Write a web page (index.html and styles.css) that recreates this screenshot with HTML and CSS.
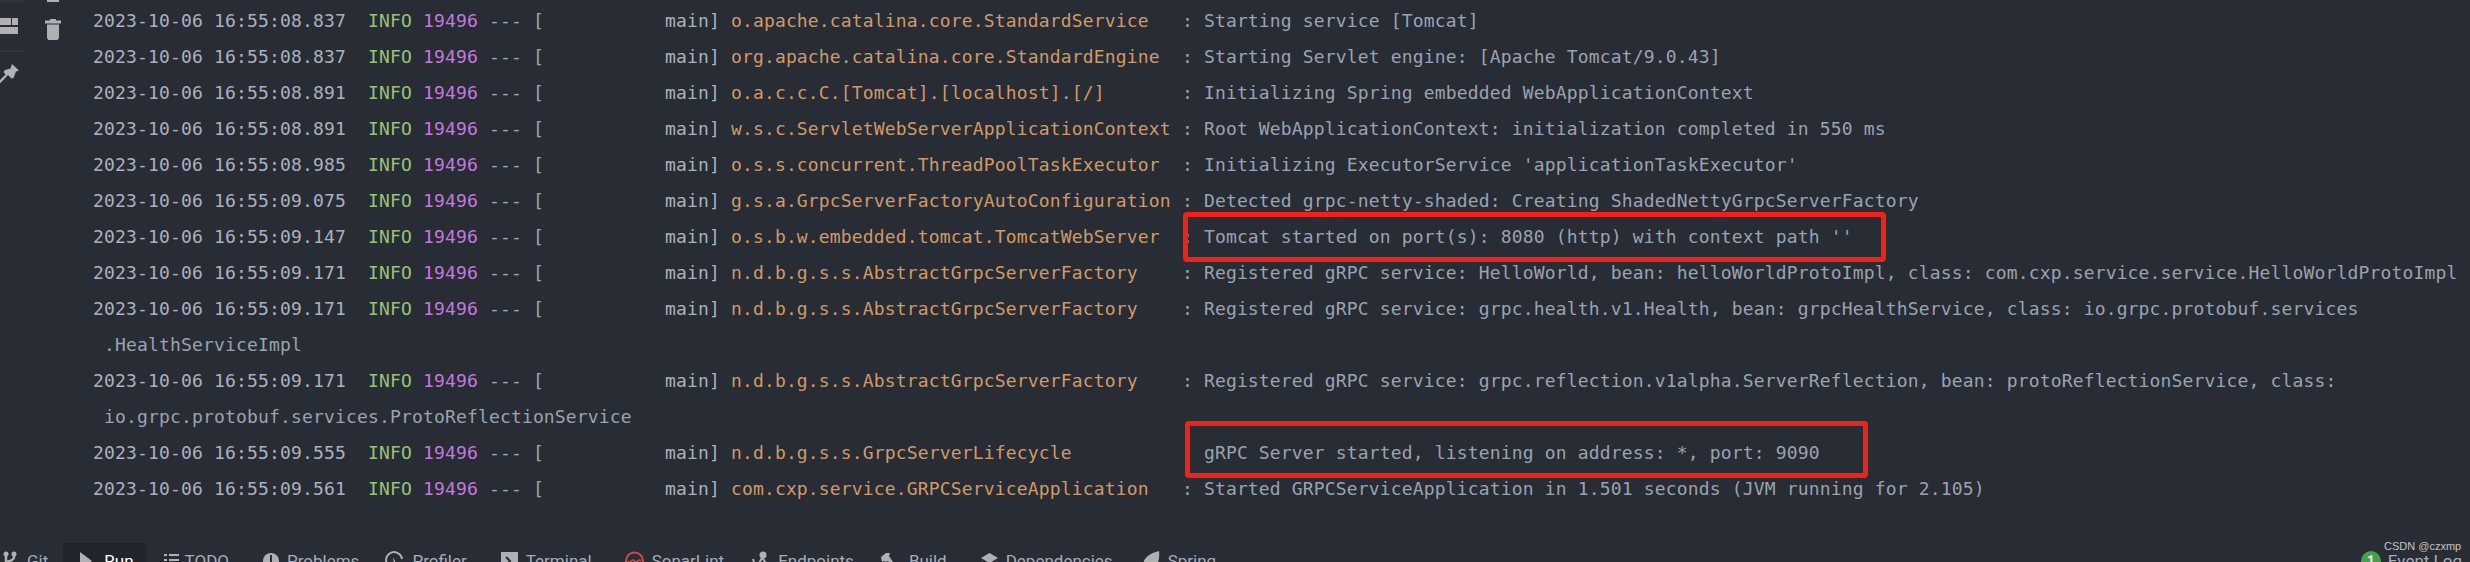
FILE: index.html
```html
<!DOCTYPE html>
<html lang="en">
<head>
<meta charset="utf-8">
<title>Run console</title>
<link rel="stylesheet" href="styles.css">
</head>
<body>
<div class="screen">
  <div class="main">
    <aside class="gutter">
      <div class="tools-a">
        <div class="divider"></div>
        <svg class="icon-layout" width="18" height="16" viewBox="0 0 18 16"><path fill="#afb1b3" d="M0 0h11v7H0zM12 0h6v7h-6zM0 9h18v7H0z"/></svg>
        <div class="divider second"></div>
        <svg class="icon-pin" width="20" height="20" viewBox="0 0 20 20"><path fill="#afb1b3" d="M12 0l7 6.500-3 1-2.500 6.500-2 .5-3.500-3.500L1 18.500 0 19v-3l5.500-5.500L3.500 8l1.500-2 5.500-1.500z"/></svg>
      </div>
      <div class="tools-b">
        <div class="icon-stub"></div>
        <svg class="icon-trash" width="16" height="21" viewBox="0 0 16 21"><path fill="#afb1b3" d="M5 0h6v1.500h5v3H0v-3h5zM2 5.500h12V19l-1.500 2h-9L2 19z"/></svg>
      </div>
    </aside>
    <main class="log">
      <div class="row"><span class="time">2023-10-06 16:55:08.837</span>  <span class="info">INFO</span> <span class="pid">19496</span> <span class="sep">---</span> <span class="sep">[</span><span class="time">           main]</span> <span class="logger">o.apache.catalina.core.StandardService</span><span class="msg">: Starting service [Tomcat]</span></div>
      <div class="row"><span class="time">2023-10-06 16:55:08.837</span>  <span class="info">INFO</span> <span class="pid">19496</span> <span class="sep">---</span> <span class="sep">[</span><span class="time">           main]</span> <span class="logger">org.apache.catalina.core.StandardEngine</span><span class="msg">: Starting Servlet engine: [Apache Tomcat/9.0.43]</span></div>
      <div class="row"><span class="time">2023-10-06 16:55:08.891</span>  <span class="info">INFO</span> <span class="pid">19496</span> <span class="sep">---</span> <span class="sep">[</span><span class="time">           main]</span> <span class="logger">o.a.c.c.C.[Tomcat].[localhost].[/]</span><span class="msg">: Initializing Spring embedded WebApplicationContext</span></div>
      <div class="row"><span class="time">2023-10-06 16:55:08.891</span>  <span class="info">INFO</span> <span class="pid">19496</span> <span class="sep">---</span> <span class="sep">[</span><span class="time">           main]</span> <span class="logger">w.s.c.ServletWebServerApplicationContext</span><span class="msg">: Root WebApplicationContext: initialization completed in 550 ms</span></div>
      <div class="row"><span class="time">2023-10-06 16:55:08.985</span>  <span class="info">INFO</span> <span class="pid">19496</span> <span class="sep">---</span> <span class="sep">[</span><span class="time">           main]</span> <span class="logger">o.s.s.concurrent.ThreadPoolTaskExecutor</span><span class="msg">: Initializing ExecutorService 'applicationTaskExecutor'</span></div>
      <div class="row"><span class="time">2023-10-06 16:55:09.075</span>  <span class="info">INFO</span> <span class="pid">19496</span> <span class="sep">---</span> <span class="sep">[</span><span class="time">           main]</span> <span class="logger">g.s.a.GrpcServerFactoryAutoConfiguration</span><span class="msg">: Detected grpc-netty-shaded: Creating ShadedNettyGrpcServerFactory</span></div>
      <div class="row"><span class="time">2023-10-06 16:55:09.147</span>  <span class="info">INFO</span> <span class="pid">19496</span> <span class="sep">---</span> <span class="sep">[</span><span class="time">           main]</span> <span class="logger">o.s.b.w.embedded.tomcat.TomcatWebServer</span><span class="msg">: Tomcat started on port(s): 8080 (http) with context path ''</span></div>
      <div class="row"><span class="time">2023-10-06 16:55:09.171</span>  <span class="info">INFO</span> <span class="pid">19496</span> <span class="sep">---</span> <span class="sep">[</span><span class="time">           main]</span> <span class="logger">n.d.b.g.s.s.AbstractGrpcServerFactory</span><span class="msg">: Registered gRPC service: HelloWorld, bean: helloWorldProtoImpl, class: com.cxp.service.service.HelloWorldProtoImpl</span></div>
      <div class="row"><span class="time">2023-10-06 16:55:09.171</span>  <span class="info">INFO</span> <span class="pid">19496</span> <span class="sep">---</span> <span class="sep">[</span><span class="time">           main]</span> <span class="logger">n.d.b.g.s.s.AbstractGrpcServerFactory</span><span class="msg">: Registered gRPC service: grpc.health.v1.Health, bean: grpcHealthService, class: io.grpc.protobuf.services</span></div>
      <div class="row"><span class="msg"> .HealthServiceImpl</span></div>
      <div class="row"><span class="time">2023-10-06 16:55:09.171</span>  <span class="info">INFO</span> <span class="pid">19496</span> <span class="sep">---</span> <span class="sep">[</span><span class="time">           main]</span> <span class="logger">n.d.b.g.s.s.AbstractGrpcServerFactory</span><span class="msg">: Registered gRPC service: grpc.reflection.v1alpha.ServerReflection, bean: protoReflectionService, class:</span></div>
      <div class="row"><span class="msg"> io.grpc.protobuf.services.ProtoReflectionService</span></div>
      <div class="row"><span class="time">2023-10-06 16:55:09.555</span>  <span class="info">INFO</span> <span class="pid">19496</span> <span class="sep">---</span> <span class="sep">[</span><span class="time">           main]</span> <span class="logger">n.d.b.g.s.s.GrpcServerLifecycle</span><span class="msg">: gRPC Server started, listening on address: *, port: 9090</span></div>
      <div class="row"><span class="time">2023-10-06 16:55:09.561</span>  <span class="info">INFO</span> <span class="pid">19496</span> <span class="sep">---</span> <span class="sep">[</span><span class="time">           main]</span> <span class="logger">com.cxp.service.GRPCServiceApplication</span><span class="msg">: Started GRPCServiceApplication in 1.501 seconds (JVM running for 2.105)</span></div>
    </main>
  </div>
  <footer class="toolbar">
    <div class="tool tool-git">
      <svg width="14" height="20" viewBox="0 0 14 20"><path fill="none" stroke="#afb1b3" stroke-width="2.500" d="M3 2v16M11 2v4c0 3-3 4-8 5"/><circle cx="3" cy="3" r="2.500" fill="#afb1b3"/><circle cx="11" cy="3" r="2.500" fill="#afb1b3"/></svg>
      <span>Git</span>
    </div>
    <div class="tool tool-run">
      <svg width="12" height="18" viewBox="0 0 12 18"><path fill="#afb1b3" d="M0 0l12 9-12 9z"/></svg>
      <span>Run</span>
    </div>
    <div class="tool tool-todo">
      <svg width="15" height="16" viewBox="0 0 15 16"><path fill="#afb1b3" d="M0 1h3v2H0zM5 1h10v2H5zM0 6h3v2H0zM5 6h10v2H5zM0 11h3v2H0zM5 11h10v2H5z"/></svg>
      <span>TODO</span>
    </div>
    <div class="tool tool-problems">
      <svg width="16" height="18" viewBox="0 0 16 18"><circle cx="8" cy="9" r="8" fill="#afb1b3"/><path fill="#282c34" d="M7 3h2v7H7zM7 12h2v2H7z"/></svg>
      <span>Problems</span>
    </div>
    <div class="tool tool-profiler">
      <svg width="19" height="20" viewBox="0 0 19 20"><path fill="none" stroke="#afb1b3" stroke-width="2" d="M5 16A8 8 0 1 1 17 8"/><path fill="#afb1b3" d="M8 6l3 6 7 7h-3l-6-5z"/></svg>
      <span>Profiler</span>
    </div>
    <div class="tool tool-terminal">
      <svg width="17" height="18" viewBox="0 0 17 18"><path fill="#afb1b3" d="M0 0h17v18H0z"/><path fill="none" stroke="#282c34" stroke-width="2" d="M5 5l4 4-4 4"/></svg>
      <span>Terminal</span>
    </div>
    <div class="tool tool-sonar">
      <svg width="19" height="20" viewBox="0 0 19 20"><circle cx="9.500" cy="10" r="8.500" fill="none" stroke="#c0504d" stroke-width="2"/><path fill="none" stroke="#c0504d" stroke-width="1.500" d="M3 10q1.600 2 3.200 0t3.200 0 3.200 0 3.200 0"/></svg>
      <span>SonarLint</span>
    </div>
    <div class="tool tool-endpoints">
      <svg width="18" height="20" viewBox="0 0 18 20"><circle cx="11" cy="4" r="3.500" fill="#afb1b3"/><path fill="none" stroke="#afb1b3" stroke-width="2" d="M1 8l3 9 6-10 2 2 4 8"/></svg>
      <span>Endpoints</span>
    </div>
    <div class="tool tool-build">
      <svg width="17" height="18" viewBox="0 0 17 18"><path fill="#afb1b3" d="M0 5l5-4h4l-1 3 2 3 6 9-2 2-7-9-2 1-2-1-2 1z"/></svg>
      <span>Build</span>
    </div>
    <div class="tool tool-deps">
      <svg width="17" height="18" viewBox="0 0 17 18"><path fill="#afb1b3" d="M8.500 1L17 6l-8.500 5L0 6zM1 9.500l7.500 4.500L16 9.500l1 1.500-8.500 5L0 11z"/></svg>
      <span>Dependencies</span>
    </div>
    <div class="tool tool-spring">
      <svg width="18" height="20" viewBox="0 0 18 20"><path fill="#afb1b3" d="M17 0c1 8-1 18-9 18-2 0-4-.5-5-2l-2 3-1-1 2-3C0 9 5 3 17 0z"/></svg>
      <span>Spring</span>
    </div>
    <div class="tool tool-event">
      <span class="badge">1</span>
      <span>Event Log</span>
    </div>
  </footer>
  <div class="mark mark-tomcat"></div>
  <div class="mark mark-grpc"></div>
  <div class="watermark">CSDN @czxmp</div>
</div>
</body>
</html>
```
FILE: styles.css
```css
* { box-sizing: border-box; }
html, body { margin: 0; padding: 0; background: #282c34; }
.screen {
  position: relative;
  width: 2470px;
  height: 562px;
  overflow: hidden;
  background: #282c34;
}
.main { display: flex; height: 543px; }
.gutter { display: flex; width: 93px; flex: none; }
.tools-a { width: 24px; }
.divider { height: 2px; background: #31353e; }
.icon-layout { display: block; margin-top: 16px; }
.divider.second { margin-top: 16px; }
.icon-pin { display: block; margin-top: 12px; }
.tools-b { margin-left: 21px; }
.icon-stub { width: 12px; height: 2px; margin-left: 2px; background: #afb1b3; }
.icon-trash { display: block; margin-top: 17px; }

.log {
  padding-top: 3px;
  font-family: "DejaVu Sans Mono", "Liberation Mono", monospace;
  font-size: 18px;
  letter-spacing: 0.16px;
}
.row { height: 36px; line-height: 36px; white-space: pre; }
.time { color: #abb2bf; }
.sep { color: #9da5b4; }
.info { color: #98c379; }
.pid { color: #c678dd; }
.logger { display: inline-block; width: 451px; color: #d19a66; }
.msg { color: #9aa3b2; }

.toolbar {
  display: flex;
  align-items: center;
  height: 36px;
  padding-left: 3px;
  font-family: Roboto, "Noto Sans", sans-serif;
  font-size: 17px;
  color: #a4adbb;
}
.tool { display: flex; align-items: center; gap: 8px; height: 36px; flex: none; }
.tool-git { gap: 10px; }
.tool-run {
  margin-left: 15px;
  padding: 0 12px 0 17px;
  gap: 12px;
  background: #21242b;
  color: #ffffff;
}
.tool-todo { margin-left: 18px; gap: 6px; }
.tool-problems { margin-left: 34px; }
.tool-profiler { margin-left: 26px; }
.tool-terminal { margin-left: 34px; }
.tool-sonar { margin-left: 33px; }
.tool-endpoints { margin-left: 28px; }
.tool-build { margin-left: 27px; gap: 11px; }
.tool-deps { margin-left: 34px; }
.tool-spring { margin-left: 29px; }
.tool-event { margin-left: auto; padding-right: 8px; gap: 7px; }
.badge {
  display: flex;
  align-items: center;
  justify-content: center;
  width: 20px;
  height: 20px;
  border-radius: 50%;
  background: #499c54;
  color: #e8e8e8;
  font-size: 14px;
  font-weight: 700;
}

.mark {
  position: absolute;
  border: 5px solid #f3201a;
  border-radius: 4px;
}
.mark-tomcat { left: 1183px; top: 212px; width: 703px; height: 50px; }
.mark-grpc { left: 1185px; top: 421px; width: 683px; height: 57px; }
.watermark {
  position: absolute;
  left: 2384px;
  top: 538px;
  font-family: "Liberation Sans", Arial, sans-serif;
  font-size: 11px;
  line-height: 16px;
  white-space: nowrap;
  color: #c4c4c4;
}
```
